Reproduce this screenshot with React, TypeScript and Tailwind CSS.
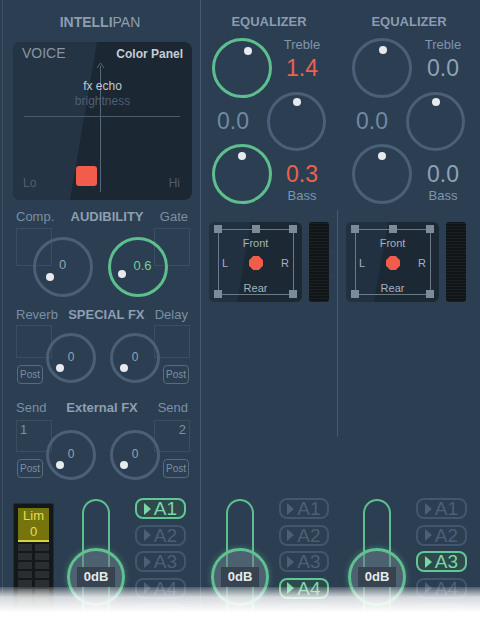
import React from 'react'

const GREEN = 'border-[#5dbe8e]'
const GRAY = 'border-[#4a6077]'

function Knob({
  size,
  box,
  ring,
  angle,
  dist,
  children,
}: {
  size: number
  box: string
  ring: string
  angle: number
  dist: number
  children?: React.ReactNode
}) {
  const r = (angle * Math.PI) / 180
  const cx = size / 2 + dist * Math.sin(r)
  const cy = size / 2 - dist * Math.cos(r)
  return (
    <div className={`relative shrink-0 rounded-full border-[3px] ${ring} ${box} flex items-center justify-center`}>
      <span
        className="absolute w-[8px] h-[8px] rounded-full bg-[#e6eaee]"
        style={{ left: cx - 7, top: cy - 7 }}
      />
      {children}
    </div>
  )
}

function Post({ side }: { side: string }) {
  return (
    <div
      className={`absolute ${side} w-[26px] h-[19px] rounded-[4px] border border-[#566b80] flex items-center justify-center text-[10px] leading-none text-[#7a8fa4]`}
    >
      Post
    </div>
  )
}

function XYPad() {
  return (
    <div className="relative ml-[13px] w-[179px] h-[158px] rounded-lg bg-[#1b2733] overflow-hidden">
      <div className="absolute inset-0 bg-[#243445] [clip-path:polygon(0_0,84px_0,57px_100%,0_100%)]" />
      <div className="absolute left-[9px] top-[3px] text-[14px] leading-[16px] text-[#8895a3]">VOICE</div>
      <div className="absolute right-[9px] top-[4px] text-[12px] leading-[16px] font-bold text-[#c6ced6]">Color Panel</div>
      <div className="absolute left-[87px] top-[24px] bottom-[8px] w-px bg-[#55687a]" />
      <svg className="absolute left-[83px] top-[20px]" width="9" height="7" viewBox="0 0 9 7">
        <path d="M1 6 L4.5 1 L8 6" fill="none" stroke="#55687a" strokeWidth="1" />
      </svg>
      <div className="absolute left-[11px] top-[74px] w-[156px] h-px bg-[#4a5c6d]" />
      <div className="absolute inset-x-0 top-[36px] text-center text-[12px] leading-[16px] text-[#c2cad2]">fx echo</div>
      <div className="absolute inset-x-0 top-[51px] text-center text-[12px] leading-[16px] text-[#4d5f70]">brightness</div>
      <div className="absolute left-[10px] top-[133px] text-[12px] leading-[16px] text-[#4d5f70]">Lo</div>
      <div className="absolute right-[12px] top-[133px] text-[12px] leading-[16px] text-[#4d5f70]">Hi</div>
      <div className="absolute left-[63px] top-[124px] w-[21px] h-[20px] rounded-[3px] bg-[#f25c4a]" />
    </div>
  )
}

function Labels({ left, title, right, pad }: { left: string; title: string; right: string; pad: string }) {
  return (
    <div className={`flex justify-between items-center pl-[16px] pr-[12px] ${pad} text-[13px] leading-[16px]`}>
      <span className="text-[#7990a6]">{left}</span>
      <span className="font-bold text-[#8d9fb2]">{title}</span>
      <span className="text-[#7990a6]">{right}</span>
    </div>
  )
}

function Panner() {
  const sq = 'absolute w-[8px] h-[8px] bg-[#7b8b9a]'
  return (
    <div className="relative w-[93px] h-[80px] rounded-md bg-[#1c2834] overflow-hidden">
      <div className="absolute inset-0 bg-[#223141] [clip-path:polygon(0_0,42px_0,28px_100%,0_100%)]" />
      <div className="absolute left-[9px] top-[7px] w-[76px] h-[66px] border border-[#6a7b8b]" />
      <div className={`${sq} left-[5px] top-[3px]`} />
      <div className={`${sq} left-[43px] top-[3px]`} />
      <div className={`${sq} left-[80px] top-[3px]`} />
      <div className={`${sq} left-[5px] top-[68px]`} />
      <div className={`${sq} left-[80px] top-[68px]`} />
      <div className="absolute inset-x-0 top-[14px] text-center text-[11px] leading-[14px] text-[#a6b2be]">Front</div>
      <div className="absolute inset-x-0 top-[59px] text-center text-[11px] leading-[14px] text-[#a6b2be]">Rear</div>
      <div className="absolute left-[13px] top-[34px] text-[11px] leading-[14px] text-[#a6b2be]">L</div>
      <div className="absolute left-[72px] top-[34px] text-[11px] leading-[14px] text-[#a6b2be]">R</div>
      <div className="absolute left-[40px] top-[34px] w-[14px] h-[14px] bg-[#f25c4a] [clip-path:polygon(30%_0,70%_0,100%_30%,100%_70%,70%_100%,30%_100%,0_70%,0_30%)]" />
    </div>
  )
}

function Meter() {
  return (
    <div className="w-[20px] h-[80px] rounded-[3px] bg-[#14181b] bg-[repeating-linear-gradient(0deg,#1b2024_0px,#1b2024_1px,#121518_1px,#121518_3px)]" />
  )
}

function EqColumn({
  width,
  knobMl,
  rightMr,
  leftMl,
  ring,
  treble,
  bass,
  valColor,
  treblePos,
}: {
  width: string
  knobMl: string
  rightMr: string
  leftMl: string
  ring: string
  treble: string
  bass: string
  valColor: string
  treblePos: number
}) {
  return (
    <div className={`${width} flex flex-col`}>
      <div className="h-[38px] pt-[14px] text-center text-[13px] leading-[16px] font-bold text-[#8a9cb0]">EQUALIZER</div>
      <div className="flex h-[60px]">
        <div className={knobMl}>
          <Knob size={60} box="w-[60px] h-[60px]" ring={ring} angle={treblePos} dist={18} />
        </div>
        <div className={`ml-auto ${rightMr} w-[44px] flex flex-col items-center`}>
          <span className="text-[13px] leading-[14px] text-[#7d96ae]">Treble</span>
          <span className={`mt-[4px] text-[23px] leading-[24px] ${valColor}`}>{treble}</span>
        </div>
      </div>
      <div className="flex h-[58px] -mt-[6px] items-center">
        <span className={`${leftMl} w-[44px] text-center text-[23px] leading-[24px] text-[#7189a0]`}>0.0</span>
        <div className="ml-[12px]">
          <Knob size={59} box="w-[59px] h-[59px]" ring={GRAY} angle={0} dist={19} />
        </div>
      </div>
      <div className="flex h-[60px] -mt-[6px]">
        <div className={knobMl}>
          <Knob size={60} box="w-[60px] h-[60px]" ring={ring} angle={0} dist={18} />
        </div>
        <div className={`ml-auto ${rightMr} w-[44px] pt-[18px] flex flex-col items-center`}>
          <span className={`text-[23px] leading-[24px] ${valColor}`}>{bass}</span>
          <span className="mt-[3px] text-[13px] leading-[14px] text-[#7d96ae]">Bass</span>
        </div>
      </div>
      <div className="flex mt-[18px]">
        <div className="ml-[8px]">
          <Panner />
        </div>
        <div className="ml-[7px]">
          <Meter />
        </div>
      </div>
    </div>
  )
}

function Tri({ color }: { color: string }) {
  return (
    <svg width="7" height="12" viewBox="0 0 7 12" className="shrink-0">
      <path d="M0 0 L7 6 L0 12 Z" fill={color} />
    </svg>
  )
}

function Buses({ active, ml, w }: { active: number; ml: string; w: string }) {
  return (
    <div className={`${ml} ${w} mt-[8px] flex flex-col gap-[5.5px]`}>
      {[1, 2, 3, 4, 5].map((n) => {
        const on = n === active
        return (
          <div
            key={n}
            className={`h-[21px] rounded-[8px] border-2 flex items-center justify-center gap-[3px] text-[19px] leading-none ${
              on ? 'border-[#62c795] text-[#78d8a8] bg-[#2e4a4a]' : 'border-[#42576b] text-[#4b6074]'
            }`}
          >
            <Tri color={on ? '#78d8a8' : '#4b6074'} />
            <span>A{n}</span>
          </div>
        )
      })}
    </div>
  )
}

function Fader({ ml }: { ml: string }) {
  return (
    <div className={`relative ${ml} w-[60px] shrink-0`}>
      <div className="mx-auto mt-[9px] w-[28px] h-[140px] rounded-full border-2 border-[#5dbe8e]" />
      <div className="absolute left-[1px] top-[58px] w-[58px] h-[58px] rounded-full border-[3px] border-[#5fc091] bg-[#6b7d8a]/55 shadow-[0_0_6px_rgba(95,192,145,0.45)] flex items-center justify-center">
        <div className="w-[38px] h-[20px] bg-[#37434e] flex items-center justify-center text-[13px] font-bold text-[#e6ebef]">
          0dB
        </div>
      </div>
    </div>
  )
}

function Lim() {
  return (
    <div className="ml-[13px] mt-[13px] w-[41px] h-[130px] rounded-[2px] bg-[#15181b] border border-[#262b30] p-[4px] flex flex-col">
      <div className="h-[46px] bg-[#76740f] border-b-2 border-[#d6d437] flex flex-col items-center justify-center text-[13px] leading-[16px] text-[#e2e04a]">
        <span>Lim</span>
        <span>0</span>
      </div>
      <div className="mt-[2px] grid grid-cols-2 gap-x-[3px] gap-y-[2px]">
        {Array.from({ length: 20 }).map((_, i) => (
          <div key={i} className="h-[7px] bg-[#2a2e32]" />
        ))}
      </div>
    </div>
  )
}

export default function App() {
  return (
    <div className="relative w-[480px] h-[621px] overflow-hidden bg-[#2c3e51] font-['Liberation_Sans',Arial,sans-serif]">
      <div className="flex h-[490px]">
        <div className="w-[200px] flex flex-col bg-[linear-gradient(to_right,transparent_2px,#3d5064_2px,#3d5064_3px,transparent_3px)]">
          <div className="h-[42px] pt-[14px] text-center text-[14px] leading-[16px] text-[#8d9db0]">
            <span className="font-bold">INTELLI</span>
            <span>PAN</span>
          </div>
          <XYPad />

          <div className="relative h-[100px]">
            <Labels left="Comp." title="AUDIBILITY" right="Gate" pad="pt-[9px]" />
            <div className="absolute left-[16px] top-[28px] w-[36px] h-[38px] border border-[#3a4d61]" />
            <div className="absolute right-[10px] top-[28px] w-[36px] h-[38px] border border-[#3a4d61]" />
            <div className="relative mt-[12px] flex justify-center gap-[15px]">
              <Knob size={60} box="w-[60px] h-[60px]" ring={GRAY} angle={230} dist={16}>
                <span className="-mt-[4px] text-[13px] text-[#8ea4b8]">0</span>
              </Knob>
              <Knob size={60} box="w-[60px] h-[60px]" ring={GREEN} angle={245} dist={17}>
                <span className="ml-[10px] -mt-[2px] text-[13px] text-[#6fcf9f]">0.6</span>
              </Knob>
            </div>
          </div>

          <div className="relative h-[95px]">
            <Labels left="Reverb" title="SPECIAL FX" right="Delay" pad="pt-[7px]" />
            <div className="absolute left-[16px] top-[25px] w-[36px] h-[33px] border border-[#3a4d61]" />
            <div className="absolute right-[10px] top-[25px] w-[36px] h-[33px] border border-[#3a4d61]" />
            <div className="relative mt-[10px] pl-[6px] flex justify-center gap-[14px]">
              <Knob size={50} box="w-[50px] h-[50px]" ring={GRAY} angle={230} dist={15}>
                <span className="-mt-[3px] text-[12px] text-[#8ea4b8]">0</span>
              </Knob>
              <Knob size={50} box="w-[50px] h-[50px]" ring={GRAY} angle={230} dist={15}>
                <span className="-mt-[3px] text-[12px] text-[#8ea4b8]">0</span>
              </Knob>
            </div>
            <Post side="left-[17px] top-[65px]" />
            <Post side="right-[11px] top-[65px]" />
          </div>

          <div className="relative h-[95px]">
            <Labels left="Send" title="External FX" right="Send" pad="pt-[5px]" />
            <div className="absolute left-[16px] top-[25px] w-[36px] h-[32px] border border-[#3a4d61]" />
            <div className="absolute right-[10px] top-[25px] w-[36px] h-[32px] border border-[#3a4d61]" />
            <div className="absolute left-[20px] top-[28px] text-[13px] leading-[14px] text-[#7990a6]">1</div>
            <div className="absolute right-[14px] top-[28px] text-[13px] leading-[14px] text-[#7990a6]">2</div>
            <div className="relative mt-[14px] pl-[6px] flex justify-center gap-[14px]">
              <Knob size={50} box="w-[50px] h-[50px]" ring={GRAY} angle={230} dist={15}>
                <span className="-mt-[3px] text-[12px] text-[#8ea4b8]">0</span>
              </Knob>
              <Knob size={50} box="w-[50px] h-[50px]" ring={GRAY} angle={230} dist={15}>
                <span className="-mt-[3px] text-[12px] text-[#8ea4b8]">0</span>
              </Knob>
            </div>
            <Post side="left-[17px] top-[64px]" />
            <Post side="right-[11px] top-[64px]" />
          </div>
        </div>

        <div className="w-px bg-[#45586c]" />

        <EqColumn
          width="w-[136px]"
          knobMl="ml-[11px]"
          rightMr="mr-[13px]"
          leftMl="ml-[10px]"
          ring={GREEN}
          treble="1.4"
          bass="0.3"
          valColor="text-[#f0604c]"
          treblePos={19}
        />

        <div className="w-px mt-[210px] h-[227px] bg-[#45586c]" />

        <EqColumn
          width="w-[142px]"
          knobMl="ml-[14px]"
          rightMr="mr-[15px]"
          leftMl="ml-[12px]"
          ring={GRAY}
          treble="0.0"
          bass="0.0"
          valColor="text-[#8ca2b7]"
          treblePos={3}
        />
      </div>

      <div className="flex h-[131px]">
        <div className="w-[200px] flex bg-[linear-gradient(to_right,transparent_2px,#3d5064_2px,#3d5064_3px,transparent_3px)]">
          <Lim />
          <Fader ml="ml-[12px]" />
          <Buses active={1} ml="ml-[9px]" w="w-[51px]" />
        </div>
        <div className="w-px bg-[#45586c]" />
        <div className="w-[136px] flex">
          <Fader ml="ml-[9px]" />
          <Buses active={4} ml="ml-[9px]" w="w-[50px]" />
        </div>
        <div className="w-px" />
        <div className="w-[142px] flex">
          <Fader ml="ml-[9px]" />
          <Buses active={3} ml="ml-[9px]" w="w-[51px]" />
        </div>
      </div>

      <div className="pointer-events-none absolute left-0 right-0 top-[587px] bottom-0 bg-[linear-gradient(to_bottom,rgba(255,255,255,0.15),rgba(255,255,255,0.8)_30%,#fff_75%)]" />
    </div>
  )
}
